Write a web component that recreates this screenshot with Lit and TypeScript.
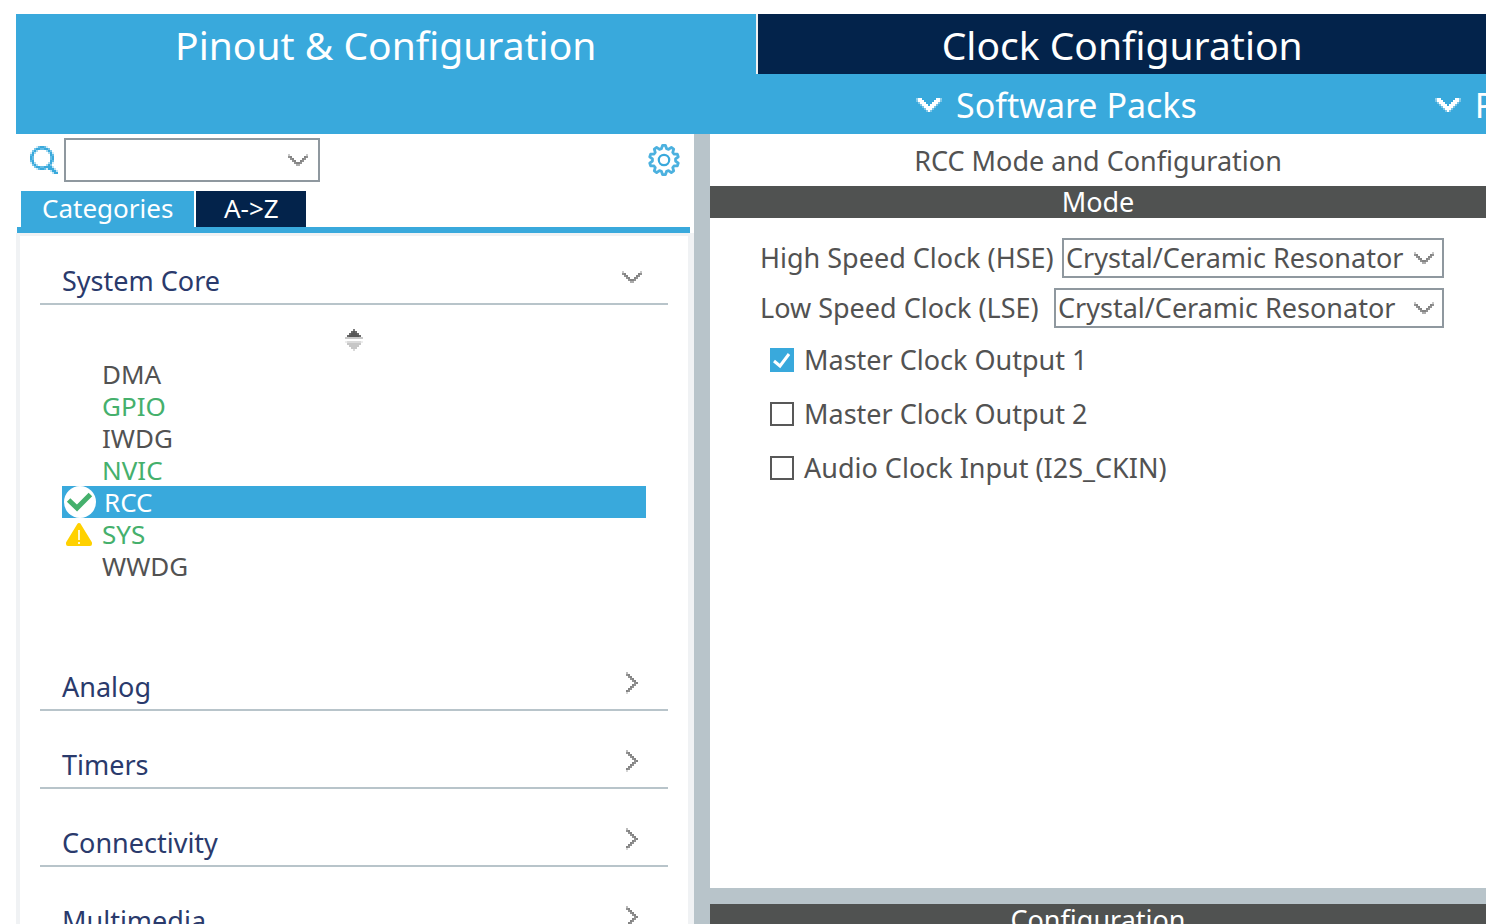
import { LitElement, html, css, svg, nothing } from "lit";
import { customElement, state } from "lit/decorators.js";
import { classMap } from "lit/directives/class-map.js";

type Status = "ok" | "warning" | null;
interface Peripheral { name: string; configured: boolean; status: Status; }

const PERIPHERALS: Peripheral[] = [
  { name: "DMA", configured: false, status: null },
  { name: "GPIO", configured: true, status: null },
  { name: "IWDG", configured: false, status: null },
  { name: "NVIC", configured: true, status: null },
  { name: "RCC", configured: true, status: "ok" },
  { name: "SYS", configured: true, status: "warning" },
  { name: "WWDG", configured: false, status: null },
];
const CATEGORIES = ["System Core", "Analog", "Timers", "Connectivity", "Multimedia"];
const SOURCES = ["Disable", "BYPASS Clock Source", "Crystal/Ceramic Resonator"];

// Low-resolution toolbar icons: one digit per 2px cell, 0 = clear, 9 = solid.
function bitmap(rows: string[], color: string) {
  const cols = rows[0].length;
  return html`<svg width=${cols * 2} height=${rows.length * 2} viewBox="0 0 ${cols} ${rows.length}"
    shape-rendering="crispEdges" aria-hidden="true">
    ${rows.flatMap((row, y) => [...row].map((c, x) =>
      c === "0" ? nothing : svg`<rect x=${x} y=${y} width="1" height="1" fill=${color} fill-opacity=${Number(c) / 9}/>`))}
  </svg>`;
}
const mirror = (half: string) => half + [...half].reverse().join("");

const chevronDown = bitmap(["40000", "89000", "08900", "00890", "00089", "00006"].map(mirror), "#848484");
const chevronRight = bitmap(
  ["500000", "890000", "089000", "008900", "000890", "000089", "000980", "009800", "098000", "980000", "300000"], "#848484");
const chevronMenu = bitmap([
  "4990000000994",
  "3999000009993",
  "0399900099930",
  "0039990999300",
  "0003999993000",
  "0000399930000",
  "0000039300000",
], "#ffffff");
const magnifier = bitmap([
  "00027997200000",
  "00699779960000",
  "06940000496000",
  "29400000049200",
  "79000000009700",
  "97000000007900",
  "97000000007900",
  "79000000009700",
  "29400000049200",
  "06940000496000",
  "00699779999300",
  "00027997299930",
  "00000000003993",
  "00000000000399",
], "#39a9dc");

function gearPath(teeth: number, outer: number, inner: number): string {
  const points: string[] = [];
  const step = (Math.PI * 2) / teeth;
  for (let i = 0; i < teeth; i++) {
    const mid = i * step - Math.PI / 2;
    for (const [offset, radius] of [[-0.36, inner], [-0.16, outer], [0.16, outer], [0.36, inner]]) {
      const a = mid + offset * step;
      points.push(`${(16 + radius * Math.cos(a)).toFixed(2)} ${(16 + radius * Math.sin(a)).toFixed(2)}`);
    }
  }
  return `M${points.join("L")}Z`;
}
const gear = html`<svg width="32" height="32" viewBox="0 0 32 32" aria-hidden="true">
  <g fill="none" stroke="#39a9dc" stroke-linejoin="round">
    <path d=${gearPath(10, 14.6, 11.6)} stroke-width="2.8" stroke-opacity="0.9"/><circle cx="16" cy="16" r="5.2" stroke-width="2.2"/></g></svg>`;
const okIcon = html`<svg width="32" height="32" viewBox="0 0 32 32" aria-hidden="true">
  <circle cx="16" cy="16" r="16" fill="#fff"/><path d="M4.600 14 13 22 26.400 8.400" fill="none" stroke="#45b06c" stroke-width="5"/></svg>`;
const warningIcon = html`<svg width="32" height="32" viewBox="0 0 32 32" aria-hidden="true">
  <path d="M17 7 28 25V26H6V25Z" fill="#ffd100" stroke="#ffd100" stroke-width="4" stroke-linejoin="round"/>
  <path d="M17 12V22M17 24V26" stroke="#fff8d0" stroke-width="2"/></svg>`;
const sortIcon = bitmap(
  ["000070000", "000898000", "008999800", "089999980", "333333333", "000000000", "122222221", "033333330", "003333300", "000333000", "000020000"],
  "#585858");

@customElement("app-root")
export class AppRoot extends LitElement {
  @state() private selected = "RCC";
  @state() private open = "System Core";

  static styles = css`
    :host {
      display: flex;
      flex-direction: column;
      box-sizing: border-box;
      height: 100vh;
      padding: 14px 0 0 16px;
      overflow: hidden;
      background: #fff;
      color: #525252;
      font: 27px/32px "Noto Sans", "Open Sans", sans-serif;
    }
    button, input, select { font: inherit; color: inherit; margin: 0; padding: 0; border: 0; border-radius: 0; background: none; }
    svg { display: block; flex: none; }
    .main-tabs { display: grid; grid-template-columns: 50.3% 1fr; gap: 3px; background: #39a9dc; flex: none; }
    .main-tab { height: 60px; padding-top: 2px; color: #fff; font-size: 39px; line-height: 58px; }
    .main-tab.inactive { background: #03234b; box-shadow: -2px 0 #f1f1f1; }
    .menu { display: flex; flex: none; height: 60px; gap: 238px; padding-left: 900px; background: #39a9dc; color: #fff; overflow: hidden; }
    .menu-button { display: flex; align-items: center; gap: 14px; padding-top: 2px; font-size: 34px; line-height: 58px; white-space: nowrap; }
    .workspace { display: grid; grid-template-columns: 678px minmax(0, 1fr); flex: 1; min-height: 0; }
    .sidebar { display: flex; flex-direction: column; min-height: 0; overflow: hidden; }
    .search { display: flex; align-items: center; height: 52px; padding: 0 14px; gap: 6px; flex: none; }
    .combo { display: flex; align-items: center; box-sizing: border-box; width: 256px; height: 44px; border: 2px solid #8f989f; }
    .combo-input { flex: 1; min-width: 0; height: 100%; outline: none; }
    .combo-button { padding: 0 10px; }
    .settings { margin-left: auto; }
    .view-tabs { display: flex; gap: 2px; padding: 5px 0 0 5px; flex: none; font-size: 26px; }
    .view-tab { min-width: 110px; height: 36px; line-height: 34px; padding: 0 21px 2px; background: #39a9dc; color: #fff; }
    .view-tab.inactive { background: #03234b; }
    .rule { flex: none; height: 6px; margin: 0 4px 0 1px; background: #39a9dc; }
    .tree { flex: 1; min-height: 0; overflow: hidden; border: solid #f0f2f4; border-width: 3px 6px 0 4px; padding: 0 20px; }
    .category { display: flex; align-items: center; justify-content: space-between; width: 100%; height: 50px; margin-top: 28px; padding: 4px 30px 0 22px; box-sizing: border-box; border-bottom: 2px solid #b8c4ca; color: #2a3a6c; text-align: left; }
    .category svg { margin-bottom: 8px; }
    .category:first-child { margin-top: 19px; }
    .category.open { padding-right: 26px; }
    .peripherals { padding: 24px 22px 28px; height: 276px; font-size: 26px; }
    .sort { display: block; margin: 0 auto 7px; }
    .list { list-style: none; margin: 0; padding: 0; }
    .peripheral { display: flex; align-items: center; width: 100%; height: 32px; line-height: 32px; text-align: left; }
    .peripheral.configured { color: #45b06c; }
    .peripheral.selected { background: #39a9dc; color: #fff; padding-left: 2px; }
    .status { width: 40px; height: 32px; flex: none; }
    .main { display: flex; flex-direction: column; min-height: 0; border-left: 16px solid #b8c4ca; }
    .title { margin: 0; padding-top: 2px; font-size: inherit; font-weight: inherit; text-align: center; line-height: 50px; flex: none; }
    .bar { margin: 0; font-size: inherit; font-weight: inherit; text-align: center; line-height: 32px; background: #505251; color: #fff; flex: none; }
    .mode { flex: 1; min-height: 0; padding: 20px 42px 0 50px; border-bottom: 16px solid #b8c4ca; }
    .field { display: flex; align-items: center; height: 40px; margin-bottom: 10px; }
    .field-label { flex: none; width: 302px; white-space: nowrap; }
    .field-label.narrow { width: 294px; }
    .select-box { display: grid; flex: 1; min-width: 0; height: 40px; align-items: center; }
    .select-box > * { grid-area: 1 / 1; }
    .select-box svg { justify-self: end; margin-right: 10px; pointer-events: none; }
    .select { appearance: none; box-sizing: border-box; width: 100%; height: 40px; line-height: 36px; padding-left: 2px; border: 2px solid #8f989f; outline: none; }
    .check { display: flex; align-items: center; gap: 10px; height: 32px; padding-left: 10px; margin: 0 0 22px; }
    .check.first { margin-top: 16px; }
    .box { display: grid; width: 24px; height: 24px; }
    .box > * { grid-area: 1 / 1; }
    .checkbox { appearance: none; width: 24px; height: 24px; border: 2px solid #585858; background: #fff; }
    .checkbox:checked { border-color: #39a9dc; background: #39a9dc; }
    .tick { visibility: hidden; pointer-events: none; }
    .checkbox:checked + .tick { visibility: visible; }
    .configuration { height: 20px; overflow: hidden; }
  `;

  private renderPeripherals() {
    return html`<div class="peripherals">
      <button class="sort" aria-label="Sort">${sortIcon}</button>
      <ul class="list">
        ${PERIPHERALS.map((p) => html`<li>
          <button
            class=${classMap({ peripheral: true, configured: p.configured, selected: p.name === this.selected })}
            @click=${() => (this.selected = p.name)}
          ><span class="status">${p.status === "ok" ? okIcon : p.status === "warning" ? warningIcon : nothing}</span>${p.name}</button>
        </li>`)}
      </ul>
    </div>`;
  }

  private renderSource(id: string, label: string, narrow: boolean) {
    return html`<div class="field">
      <label class=${classMap({ "field-label": true, narrow })} for=${id}>${label}</label>
      <div class="select-box">
        <select class="select" id=${id}>
          ${SOURCES.map((s) => html`<option ?selected=${s === "Crystal/Ceramic Resonator"}>${s}</option>`)}
        </select>
        ${chevronDown}
      </div>
    </div>`;
  }

  private renderCheck(label: string, checked: boolean, first = false) {
    return html`<label class=${classMap({ check: true, first })}>
      <span class="box">
        <input class="checkbox" type="checkbox" ?checked=${checked} />
        <svg class="tick" width="24" height="24" viewBox="0 0 24 24" aria-hidden="true">
          <path d="M4 13 10 18 19 6" fill="none" stroke="#fff" stroke-width="3"/></svg>
      </span>${label}
    </label>`;
  }

  render() {
    return html`
      <header class="main-tabs">
        <button class="main-tab">Pinout &amp; Configuration</button>
        <button class="main-tab inactive">Clock Configuration</button>
      </header>
      <nav class="menu">
        <button class="menu-button">${chevronMenu}Software Packs</button>
        <button class="menu-button">${chevronMenu}Pinout</button>
      </nav>
      <div class="workspace">
        <aside class="sidebar">
          <div class="search">
            ${magnifier}
            <div class="combo">
              <input class="combo-input" type="text" aria-label="Search" />
              <button class="combo-button" aria-label="Show results">${chevronDown}</button>
            </div>
            <button class="settings" aria-label="Settings">${gear}</button>
          </div>
          <div class="view-tabs">
            <button class="view-tab">Categories</button>
            <button class="view-tab inactive">A-&gt;Z</button>
          </div>
          <div class="rule"></div>
          <div class="tree">
            ${CATEGORIES.map((c) => {
              const open = c === this.open;
              return html`<button
                  class=${classMap({ category: true, open })}
                  aria-expanded=${open}
                  @click=${() => (this.open = c)}
                >${c}${open ? chevronDown : chevronRight}</button>
                ${open ? this.renderPeripherals() : nothing}`;
            })}
          </div>
        </aside>
        <main class="main">
          <h1 class="title">RCC Mode and Configuration</h1>
          <h2 class="bar">Mode</h2>
          <section class="mode">
            ${this.renderSource("hse", "High Speed Clock (HSE)", false)}
            ${this.renderSource("lse", "Low Speed Clock (LSE)", true)}
            ${this.renderCheck("Master Clock Output 1", true, true)}
            ${this.renderCheck("Master Clock Output 2", false)}
            ${this.renderCheck("Audio Clock Input (I2S_CKIN)", false)}
          </section>
          <h2 class="bar configuration">Configuration</h2>
        </main>
      </div>
    `;
  }
}
